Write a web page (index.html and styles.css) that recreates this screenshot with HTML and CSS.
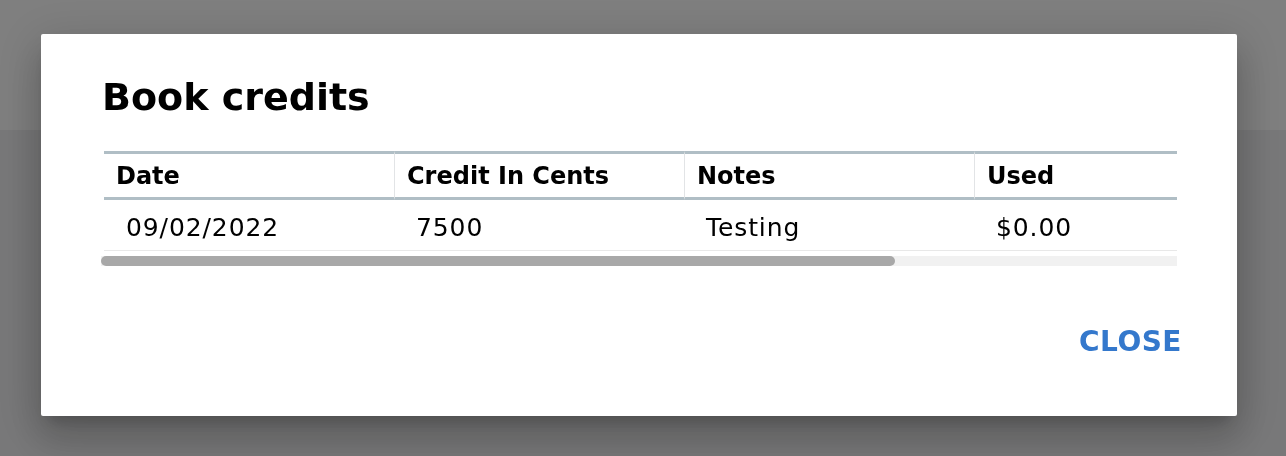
FILE: index.html
```html
<!DOCTYPE html>
<html lang="en">
<head>
<meta charset="utf-8">
<title>Book credits</title>
<link rel="stylesheet" href="styles.css">
</head>
<body>
<div class="page">
  <header class="page-header"></header>
  <main class="page-main"></main>
</div>
<div class="backdrop">
  <div class="dialog" role="dialog" aria-labelledby="dlg-title">
    <h2 class="dialog-title" id="dlg-title">Book credits</h2>
    <div class="table-scroll">
      <table class="credits">
        <thead>
          <tr>
            <th>Date</th>
            <th>Credit In Cents</th>
            <th>Notes</th>
            <th>Used</th>
          </tr>
        </thead>
        <tbody>
          <tr>
            <td>09/02/2022</td>
            <td>7500</td>
            <td>Testing</td>
            <td>$0.00</td>
          </tr>
        </tbody>
      </table>
    </div>
    <div class="scrollbar" aria-hidden="true">
      <div class="scrollbar-thumb"></div>
    </div>
    <div class="dialog-actions">
      <button class="btn-text" type="button">Close</button>
    </div>
  </div>
</div>
</body>
</html>
```

FILE: styles.css
```css
* { box-sizing: border-box; }
html, body { margin: 0; padding: 0; }
body {
  font-family: "DejaVu Sans", "Liberation Sans", sans-serif;
  color: #000;
  width: 1286px;
  height: 456px;
  overflow: hidden;
}
.page { display: flex; flex-direction: column; height: 456px; }
.page-header { height: 130px; background: #ffffff; }
.page-main { flex: 1; background: #f0f0f2; }

.backdrop {
  position: fixed;
  inset: 0;
  background: rgba(0, 0, 0, 0.5);
  display: flex;
  align-items: flex-start;
  justify-content: flex-start;
  padding: 34px 0 0 41px;
}
.dialog {
  width: 1196px;
  height: 382px;
  background: #fff;
  border-radius: 2px;
  box-shadow: 0 11px 15px -7px rgba(0,0,0,0.2), 0 24px 38px 3px rgba(0,0,0,0.14), 0 9px 46px 8px rgba(0,0,0,0.12);
  padding: 40px 60px 0 60px;
  display: flex;
  flex-direction: column;
}
.dialog-title {
  margin: 0 0 31px 1px;
  font-size: 38px;
  line-height: 46px;
  font-weight: 700;
}
.table-scroll {
  margin-left: 0;
  width: 1076px;
  overflow: hidden;
}
.credits {
  border-collapse: separate;
  border-spacing: 0;
  margin: 0 0 5px 3px;
  table-layout: fixed;
  width: 1160px;
}
.credits th, .credits td { width: 290px; text-align: left; white-space: nowrap; }
.credits th {
  height: 49px;
  padding: 1px 12px 0;
  font-size: 24px;
  font-weight: 700;
  border-top: 3px solid #b0bec5;
  border-bottom: 3px solid #b0bec5;
  line-height: 42px;
}
.credits th + th { border-left: 1px solid #e2e4e6; }
.credits td {
  height: 51px;
  padding: 6px 22px 0;
  font-size: 25px;
  font-weight: 400;
  letter-spacing: 0.9px;
  line-height: 44px;
  border-bottom: 1px solid #e8e8e8;
}

.scrollbar {
  width: 1076px;
  height: 10px;
  background: #f1f1f1;
  flex-shrink: 0;
}
.scrollbar-thumb {
  width: 794px;
  height: 10px;
  background: #a8a8a8;
  border-radius: 5px;
}

.dialog-actions {
  margin-top: auto;
  display: flex;
  justify-content: flex-end;
  padding: 0 0 57px;
}
.btn-text {
  border: 0;
  background: none;
  padding: 0;
  font-family: inherit;
  font-size: 28px;
  line-height: 34px;
  font-weight: 700;
  letter-spacing: 0.5px;
  text-transform: uppercase;
  color: #3478cc;
  margin-right: -5px;
  cursor: pointer;
}
```
